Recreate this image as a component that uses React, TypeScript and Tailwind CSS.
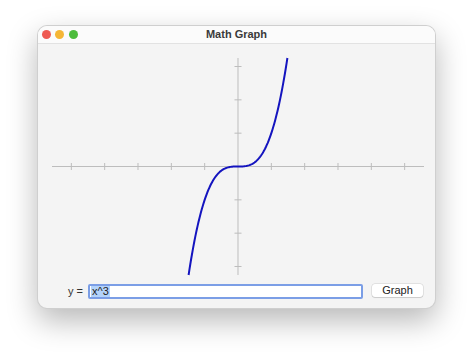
import React from 'react';

const UNIT = 33.33;
const CX = 200;
const CY = 122.5;

function buildCurve() {
    const pts: string[] = [];
    const limit = 108.5 / UNIT;
    const xMax = Math.cbrt(limit);
    const steps = 120;
    for (let i = 0; i <= steps; i++) {
        const x = -xMax + (2 * xMax * i) / steps;
        const y = x * x * x;
        const px = CX + x * UNIT;
        const py = CY - y * UNIT;
        pts.push(`${i === 0 ? 'M' : 'L'}${px.toFixed(2)},${py.toFixed(2)}`);
    }
    return pts.join(' ');
}

function Graph() {
    const xTicks = [-5, -4, -3, -2, -1, 1, 2, 3, 4, 5];
    const yTicks = [-3, -2, -1, 1, 2, 3];
    return (
        <svg width="399" height="240" className="block">
            <line x1="14" y1={CY} x2="386" y2={CY} stroke="#bdbdbd" strokeWidth="1" />
            <line x1={CX} y1="14" x2={CX} y2="231" stroke="#bdbdbd" strokeWidth="1" />
            {xTicks.map((t) => (
                <line key={'x' + t} x1={CX + t * UNIT} y1={CY - 3.5} x2={CX + t * UNIT} y2={CY + 3.5} stroke="#bdbdbd" strokeWidth="1" />
            ))}
            {yTicks.map((t) => (
                <line key={'y' + t} x1={CX - 3.5} y1={CY - t * UNIT} x2={CX + 3.5} y2={CY - t * UNIT} stroke="#bdbdbd" strokeWidth="1" />
            ))}
            <path d={buildCurve()} fill="none" stroke="#1414bf" strokeWidth="2" />
        </svg>
    );
}

export default function App() {
    return (
        <div className="w-[474px] h-[359px] bg-white pt-[25px] pl-[37px] font-['Liberation_Sans',Arial,sans-serif]">
            <div className="w-[399px] h-[284px] rounded-[10px] overflow-hidden border border-black/15 bg-[#f4f4f4] shadow-[0_12px_30px_rgba(0,0,0,0.28)]">
                {/* title bar */}
                <div className="relative h-[18px] bg-[#fbfbfb] border-b border-[#e2e2e2] flex items-center justify-center">
                    <div className="absolute left-[3.5px] top-[3.5px] flex gap-[4.5px]">
                        <span className="w-[9px] h-[9px] rounded-full bg-[#ee5a52]" />
                        <span className="w-[9px] h-[9px] rounded-full bg-[#f5b635]" />
                        <span className="w-[9px] h-[9px] rounded-full bg-[#4cbc3c]" />
                    </div>
                    <span className="text-[11px] font-semibold text-[#3a3a3a] leading-none">Math Graph</span>
                </div>

                <Graph />

                <div className="flex items-start h-[15px] pl-[30px]">
                    <span className="text-[11px] text-[#333] leading-[15px] w-[20px]">y =</span>
                    <div className="w-[275px] h-[15px] bg-white border-2 border-[#7b9ee6] rounded-[2px] flex items-center pl-[1px]">
                        <span className="text-[11px] leading-[11px] text-[#222] bg-[#b3d3fb] px-[1px]">x^3</span>
                    </div>
                    <button className="ml-[9px] w-[51px] h-[13px] bg-white rounded-[3px] shadow-[0_0_0_0.5px_rgba(0,0,0,0.15),0_1px_1px_rgba(0,0,0,0.1)] text-[11px] leading-[13px] text-[#222] text-center">
                        Graph
                    </button>
                </div>
            </div>
        </div>
    );
}
